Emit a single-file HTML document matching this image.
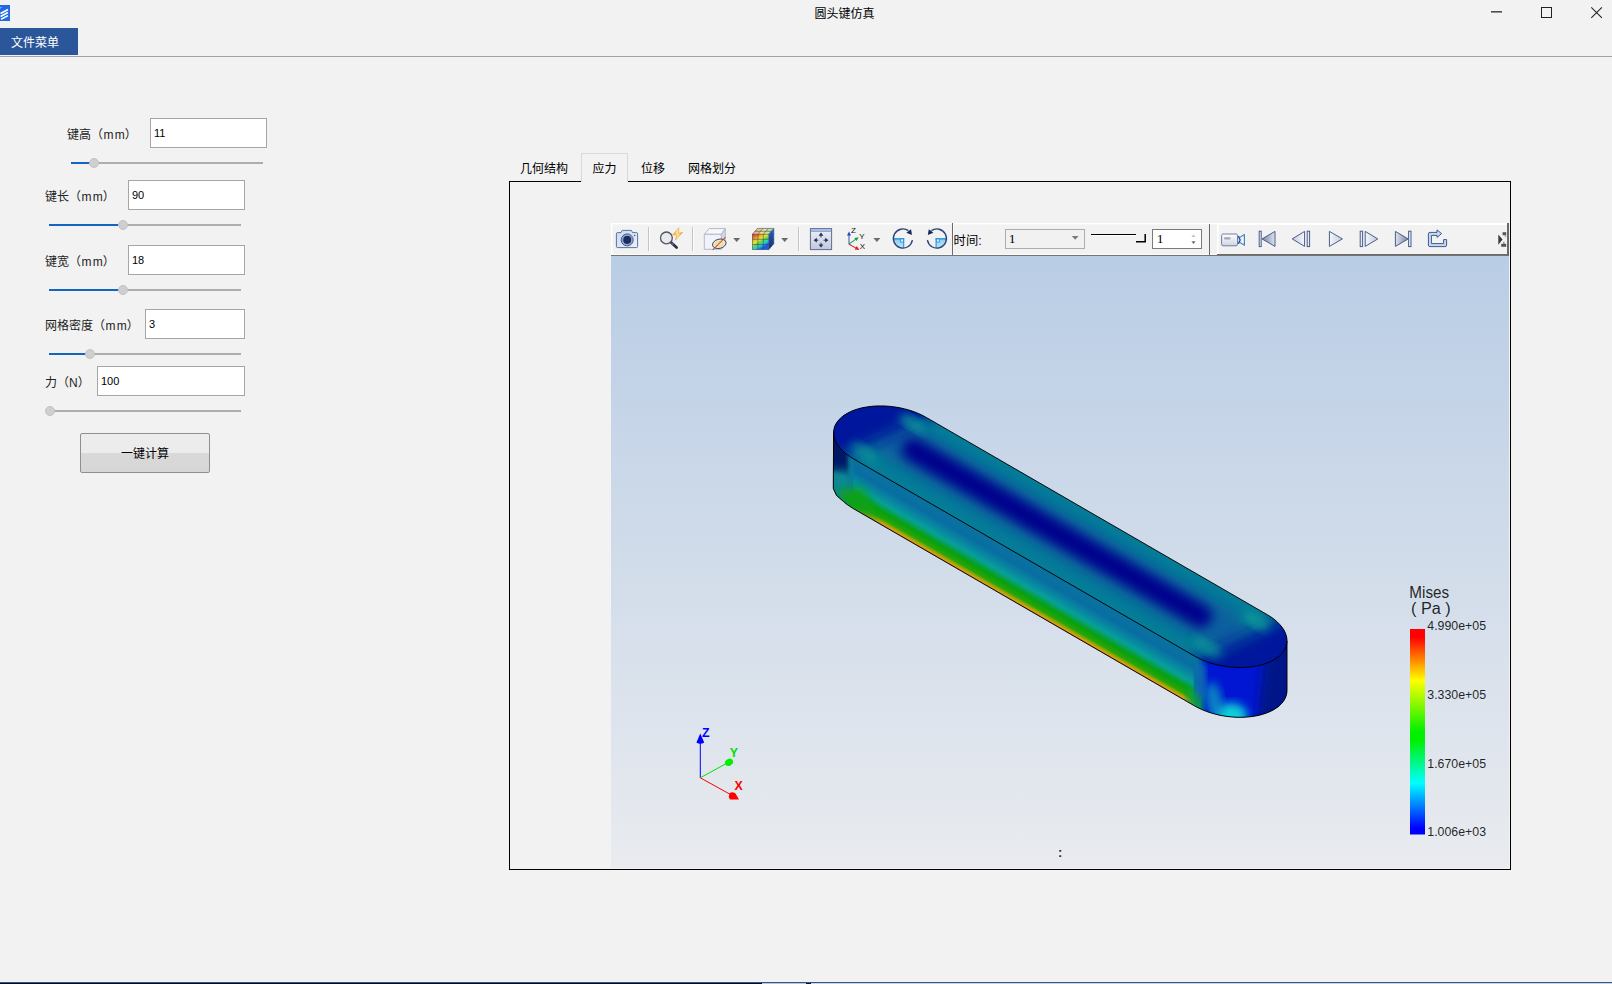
<!DOCTYPE html>
<html lang="zh-CN">
<head>
<meta charset="utf-8">
<title>圆头键仿真</title>
<style>
*{box-sizing:border-box;margin:0;padding:0}
html,body{width:1612px;height:984px;overflow:hidden;background:#f2f2f2}
body{position:relative;font-family:"Liberation Sans","Noto Sans CJK SC",sans-serif;font-size:12px;color:#1a1a1a}
.abs{position:absolute}
#title{left:814.5px;top:5px;width:62px;height:18px;line-height:18px;font-size:12px;color:#000;white-space:nowrap}
#menu{left:0;top:28px;width:78px;height:27px;background:#2b579a;color:#fff;font-size:12px;line-height:31px;padding-left:11px;white-space:nowrap}
#menuline{left:0;top:56px;width:1612px;height:1px;background:#a2a2a2}
.lbl{position:absolute;height:18px;line-height:18px;font-size:12px;color:#222;white-space:nowrap}
.lt{letter-spacing:1.1px;margin-right:-1.1px;padding-left:0.6px}
.inp{position:absolute;height:30px;background:#fff;border:1px solid #a6a6a6;font-size:11px;line-height:28px;padding-left:3px;color:#000}
.trk{position:absolute;height:2px;background:#adadad}
.trk i{position:absolute;left:0;top:0;height:2px;background:#1565c0}
.trk b{position:absolute;top:-4px;width:10px;height:10px;border-radius:50%;background:#cfcfcf;border:1px solid #c2c2c2}
#btn{left:80px;top:433px;width:130px;height:40px;border:1px solid #8f8f8f;border-radius:2px;background:linear-gradient(#ececec 0,#ececec 49%,#d9d9d9 51%,#d6d6d6 100%);text-align:center;line-height:41px;font-size:12px;color:#000}
.tab{position:absolute;top:160px;height:18px;line-height:18px;font-size:12px;color:#000;white-space:nowrap}
#tabsel{left:581px;top:153px;width:47px;height:29px;border:1px solid #d9d9d9;border-bottom:none;background:#f2f2f2;z-index:2}
#panel{left:509px;top:181px;width:1002px;height:689px;border:1px solid #000}
#tb{left:611px;top:223px;width:898px;height:33px;background:#f2f2f2}
#vp{left:611px;top:256px;width:898px;height:612px;background:linear-gradient(#b9cde5,#e9ebef)}
#bottomline{left:0;top:982px;width:1612px;height:2px;background:linear-gradient(to right,#0c0c10 0,#0c0c10 762px,#c4c4c4 762px,#c4c4c4 806px,#111 806px,#111 811px,#cdd2dc 811px) 0 1px/100% 1px no-repeat,#2f5596}
</style>
</head>
<body>
<div id="title" class="abs">圆头键仿真</div>
<div id="menu" class="abs">文件菜单</div>
<div id="menuline" class="abs"></div>

<div class="lbl" style="left:67px;top:126px">键高（<span class="lt">mm</span>）</div>
<div class="inp" style="left:150px;top:118px;width:117px">11</div>
<div class="trk" style="left:71px;top:162px;width:192px"><i style="width:23px"></i><b style="left:18px"></b></div>

<div class="lbl" style="left:45px;top:188px">键长（<span class="lt">mm</span>）</div>
<div class="inp" style="left:128px;top:180px;width:117px">90</div>
<div class="trk" style="left:49px;top:224px;width:192px"><i style="width:74px"></i><b style="left:69px"></b></div>

<div class="lbl" style="left:45px;top:253px">键宽（<span class="lt">mm</span>）</div>
<div class="inp" style="left:128px;top:245px;width:117px">18</div>
<div class="trk" style="left:49px;top:289px;width:192px"><i style="width:74px"></i><b style="left:69px"></b></div>

<div class="lbl" style="left:45px;top:317px">网格密度（<span class="lt">mm</span>）</div>
<div class="inp" style="left:145px;top:309px;width:100px">3</div>
<div class="trk" style="left:49px;top:353px;width:192px"><i style="width:41px"></i><b style="left:36px"></b></div>

<div class="lbl" style="left:45px;top:374px">力（N）</div>
<div class="inp" style="left:97px;top:366px;width:148px">100</div>
<div class="trk" style="left:49px;top:410px;width:192px"><b style="left:-4px"></b></div>

<div id="btn" class="abs">一键计算</div>

<div class="tab" style="left:520px">几何结构</div>
<div id="tabsel" class="abs"></div>
<div class="tab" style="left:592.5px;z-index:3">应力</div>
<div class="tab" style="left:641px">位移</div>
<div class="tab" style="left:688px">网格划分</div>
<div id="panel" class="abs"></div>
<div id="tb" class="abs"></div>
<div id="vp" class="abs"></div>
<svg class="abs" style="left:611px;top:223px" width="898" height="33" viewBox="611 223 898 33" font-family="'Liberation Sans','Noto Sans CJK SC',sans-serif">
<defs>
<linearGradient id="gCam" x1="0" y1="0" x2="1" y2="1"><stop offset="0" stop-color="#c6d9f2"/><stop offset="0.6" stop-color="#dde8f8"/><stop offset="1" stop-color="#eaf1fb"/></linearGradient><linearGradient id="gBolt" x1="0" y1="0" x2="1" y2="0"><stop offset="0" stop-color="#f09a1c"/><stop offset="0.5" stop-color="#ffe9a0"/><stop offset="1" stop-color="#f09a1c"/></linearGradient>
<linearGradient id="gFit" x1="0" y1="0" x2="0" y2="1"><stop offset="0" stop-color="#eef1f7"/><stop offset="1" stop-color="#c3c8d6"/></linearGradient>
<linearGradient id="gTriD" x1="0" y1="0" x2="1" y2="0"><stop offset="0" stop-color="#76849f"/><stop offset="1" stop-color="#dfe4ee"/></linearGradient>
<linearGradient id="gTriDr" x1="1" y1="0" x2="0" y2="0"><stop offset="0" stop-color="#76849f"/><stop offset="1" stop-color="#dfe4ee"/></linearGradient>
<linearGradient id="gTriL" x1="0" y1="0" x2="1" y2="0"><stop offset="0" stop-color="#f6f7fa"/><stop offset="1" stop-color="#c4cbdc"/></linearGradient>
<linearGradient id="gTriLr" x1="1" y1="0" x2="0" y2="0"><stop offset="0" stop-color="#f6f7fa"/><stop offset="1" stop-color="#c4cbdc"/></linearGradient>
<linearGradient id="gQ" x1="0" y1="0" x2="0" y2="1"><stop offset="0" stop-color="#58b4e8"/><stop offset="0.2" stop-color="#9ad4f2"/><stop offset="1" stop-color="#c8e8f8"/></linearGradient>
<linearGradient id="gVid" x1="0" y1="0" x2="0" y2="1"><stop offset="0" stop-color="#ffffff"/><stop offset="1" stop-color="#cfd4e0"/></linearGradient>
<linearGradient id="gRb" x1="0" y1="0" x2="0.62" y2="0.9"><stop offset="0" stop-color="#dc2a1c"/><stop offset="0.18" stop-color="#ec6a20"/><stop offset="0.36" stop-color="#f2c024"/><stop offset="0.5" stop-color="#e0e630"/><stop offset="0.64" stop-color="#5cd84c"/><stop offset="0.8" stop-color="#30cfc8"/><stop offset="1" stop-color="#1c5cd8"/></linearGradient>
<linearGradient id="gRbT" x1="0" y1="0" x2="1" y2="0"><stop offset="0" stop-color="#f0a070"/><stop offset="0.5" stop-color="#f0e090"/><stop offset="1" stop-color="#a0e0a0"/></linearGradient>
<linearGradient id="gRbR" x1="0" y1="0" x2="0" y2="1"><stop offset="0" stop-color="#3070d8"/><stop offset="1" stop-color="#102880"/></linearGradient>
<clipPath id="cQ1"><circle cx="902.9" cy="238.5" r="9.4"/></clipPath>
<clipPath id="cQ2"><circle cx="936.9" cy="238.5" r="9.4"/></clipPath>
</defs>
<!-- background + bevels -->
<rect x="611" y="223" width="898" height="33" fill="#f2f2f2"/>
<rect x="611" y="223" width="898" height="1.4" fill="#fff"/>
<rect x="611" y="223" width="1.4" height="31" fill="#fff"/>
<rect x="611" y="254" width="606" height="1" fill="#fbfbfb"/>
<rect x="611" y="255" width="898" height="1" fill="#747474"/>
<rect x="1217" y="254" width="292" height="1" fill="#6e6c6a"/>
<rect x="1217" y="223" width="292" height="2" fill="#fff"/>
<rect x="1217" y="223" width="1.6" height="31" fill="#fff"/>
<rect x="952" y="223" width="1" height="32" fill="#6a6a6a"/>
<rect x="953" y="224" width="1" height="30" fill="#fafafa"/>
<rect x="1209" y="224" width="1" height="31" fill="#6a6a6a"/>
<rect x="1507" y="223" width="2" height="33" fill="#6a6a6a"/>
<!-- separators -->
<g fill="#c6c6c6"><rect x="648" y="227" width="1" height="24"/><rect x="692" y="227" width="1" height="24"/><rect x="798" y="227" width="1" height="24"/></g>
<g fill="#fafafa"><rect x="649" y="227" width="1" height="24"/><rect x="693" y="227" width="1" height="24"/><rect x="799" y="227" width="1" height="24"/></g>
<!-- 1 camera -->
<path d="M617.6 232.6 H621 L622.2 230.4 H631.4 L632.6 232.6 H636.4 Q637.6 232.6 637.6 233.8 V246.4 Q637.6 247.6 636.4 247.6 H617.6 Q616.4 247.6 616.4 246.4 V233.8 Q616.4 232.6 617.6 232.6Z" fill="url(#gCam)" stroke="#4a6498" stroke-width="0.9"/>
<circle cx="627.2" cy="239.9" r="6" fill="#d4e2f6" stroke="#1c3060" stroke-width="0.8"/><circle cx="627.2" cy="239.9" r="5" fill="none" stroke="#2c4478" stroke-width="0.5"/>
<circle cx="627.2" cy="239.9" r="4.1" fill="#1a2e60"/>
<circle cx="634.6" cy="235.5" r="0.8" fill="#3a5a98"/>
<!-- 2 magnifier -->
<path d="M671.2 242.6 L676.6 247.6" stroke="#303030" stroke-width="2.7" stroke-linecap="round"/>
<path d="M671.6 243 L673.4 244.6" stroke="#3a68b0" stroke-width="2.2"/>
<circle cx="666.4" cy="237.9" r="5.9" fill="#e6eaf1" stroke="#555" stroke-width="1.3"/>
<polygon points="678.9,227.8 672.8,234.7 677,235 675.2,240.2 682.6,232.4 678.6,233.2" fill="url(#gBolt)" stroke="#e8901c" stroke-width="0.5"/>
<!-- 3 cube w/ ellipse -->
<g stroke="#b3bace" stroke-width="1" stroke-linejoin="round">
<path d="M704.3 234.3 L709.3 228.6 H725.3 L721.3 234.3Z" fill="#f7f8fb"/>
<path d="M721.3 234.3 L725.3 228.6 V243.4 L721.3 249.3Z" fill="#d3d7e0"/>
<rect x="704.3" y="234.3" width="17" height="15" fill="#f1f3f8"/>
</g>
<ellipse cx="719.3" cy="243.8" rx="6.9" ry="4.6" transform="rotate(-14 719.3 243.8)" fill="#f3e7bd" stroke="#2c3e74" stroke-width="0.9"/>
<ellipse cx="719.3" cy="243.8" rx="3.8" ry="2.2" transform="rotate(-14 719.3 243.8)" fill="none" stroke="#e4c890" stroke-width="0.8"/>
<path d="M712.6 250 L725.6 237" stroke="#c8421f" stroke-width="1.05"/>
<polygon points="733.2,238 740.2,238 736.7,242" fill="#6b6b6b"/>
<!-- 4 rubik -->
<polygon points="752.4,234.2 757.4,228.4 773.8,228.4 768.8,234.2" fill="url(#gRbT)"/>
<polygon points="768.8,234.2 773.8,228.4 773.8,243.8 768.8,249.6" fill="url(#gRbR)"/>
<rect x="752.4" y="234.2" width="16.4" height="15.4" fill="url(#gRb)"/>
<g stroke="#2a3a60" stroke-width="0.7" fill="none" opacity="0.75">
<rect x="752.4" y="234.2" width="16.4" height="15.4"/>
<path d="M757.9 234.2 V249.6 M763.3 234.2 V249.6 M752.4 239.3 H768.8 M752.4 244.5 H768.8"/>
<path d="M752.4 234.2 L757.4 228.4 H773.8 L768.8 234.2 M773.8 228.4 V243.8 L768.8 249.6"/>
<path d="M757.9 234.2 L762.9 228.4 M763.3 234.2 L768.3 228.4 M754.9 231.3 H771.3 M771.3 231.3 V246.7 M768.8 239.3 L773.8 233.5 M768.8 244.5 L773.8 238.7"/>
</g>
<polygon points="781.2,238 788.2,238 784.7,242" fill="#6b6b6b"/>
<!-- 5 fit all -->
<rect x="810.4" y="228.6" width="21.2" height="21" fill="url(#gFit)" stroke="#5c6c9c" stroke-width="1"/>
<rect x="811" y="229.2" width="20" height="1.6" fill="#9db8de"/>
<rect x="810.4" y="230.9" width="21.2" height="0.8" fill="#7c8ab0"/>
<g fill="#1d3160" stroke="#1d3160" stroke-width="1.1">
<path d="M821 234.6 V245.8 M815.4 240.2 H826.6" fill="none" stroke-dasharray="3 5.2" stroke="#5a6c98" stroke-width="1.4"/>
<polygon points="821,232.6 823.4,235.8 818.6,235.8" stroke="none"/><polygon points="821,247.6 823.4,244.4 818.6,244.4" stroke="none"/>
<polygon points="813.6,240.2 816.8,237.8 816.8,242.6" stroke="none"/><polygon points="828.4,240.2 825.2,237.8 825.2,242.6" stroke="none"/>
</g>
<!-- 6 axes -->
<g stroke-width="1.05" fill="none">
<path d="M849 244.2 V234" stroke="#3a58c0"/><path d="M849 244.2 L856.6 238.6" stroke="#10a040"/><path d="M849 244.2 L857 248.6" stroke="#e02020"/>
</g>
<polygon points="849,231.4 851,235.4 847,235.4" fill="#2244c0"/>
<polygon points="858.6,237.2 854.4,238 856.6,241" fill="#10a040"/>
<polygon points="859.4,250 854.6,249.4 856.8,246" fill="#e02020"/>
<g font-size="8" fill="#111"><text x="851" y="232.9">Z</text><text x="859.2" y="239.4">Y</text><text x="859.8" y="249.4">X</text></g>
<polygon points="873.4,238 880.4,238 876.9,242" fill="#6b6b6b"/>
<!-- 7 rotate cw -->
<g clip-path="url(#cQ1)"><rect x="892" y="238.4" width="12.2" height="12" fill="url(#gQ)"/><rect x="892" y="238.2" width="12.2" height="1.2" fill="#2a90d8"/><rect x="903.2" y="238.4" width="1" height="12" fill="#2a90d8"/></g>
<rect x="900.4" y="239" width="3" height="3" fill="#d8eefa" stroke="#2a90d8" stroke-width="0.8"/>
<path d="M912.4 240.2 A9.6 9.6 0 1 1 908.4 230.6" fill="none" stroke="#2a4478" stroke-width="1.4"/>
<polygon points="911,229.2 912,235 906.4,232.8" fill="#14285a"/>
<!-- 8 rotate ccw -->
<g clip-path="url(#cQ2)"><rect x="935.6" y="238.4" width="12.2" height="12" fill="url(#gQ)"/><rect x="935.6" y="238.2" width="12.2" height="1.2" fill="#2a90d8"/><rect x="935.6" y="238.4" width="1" height="12" fill="#2a90d8"/></g>
<rect x="936.4" y="239" width="3" height="3" fill="#d8eefa" stroke="#2a90d8" stroke-width="0.8"/>
<path d="M927.4 240.2 A9.6 9.6 0 1 0 931.4 230.6" fill="none" stroke="#2a4478" stroke-width="1.4"/>
<polygon points="928.8,229.2 927.8,235 933.4,232.8" fill="#14285a"/>
<!-- time label -->
<text x="953.6" y="244.6" font-size="12" fill="#000" textLength="28" lengthAdjust="spacingAndGlyphs">时间:</text>
<!-- combo -->
<rect x="1005.5" y="229.5" width="79" height="19" fill="#f1f1f1" stroke="#adadad" stroke-width="1"/>
<text x="1008.8" y="243.2" font-size="13.5" font-family="'Liberation Serif',serif" fill="#000">1</text>
<polygon points="1071.8,236 1078.6,236 1075.2,239.8" fill="#7a7a7a"/>
<!-- mini slider -->
<path d="M1091 234.5 H1136" stroke="#000" stroke-width="1"/><path d="M1092 235.5 H1136" stroke="#fff" stroke-width="1"/>
<path d="M1145.2 234 V241.8 H1136" stroke="#000" stroke-width="1.5" fill="none"/>
<!-- spinbox -->
<rect x="1152.5" y="229.5" width="49" height="19" fill="#fff" stroke="#7a7a7a" stroke-width="1"/>
<text x="1156.8" y="243.2" font-size="13.5" font-family="'Liberation Serif',serif" fill="#000">1</text>
<polygon points="1191.4,237 1195.6,237 1193.5,234.2" fill="#c4c4c4"/>
<polygon points="1191.4,241.2 1195.6,241.2 1193.5,244" fill="#6a6a6a"/>
<!-- video cam -->
<path d="M1237.2 235.8 L1240 237.2 L1244.4 234.4 V245.4 L1240 242.6 L1237.2 244Z" fill="#bfe6fa" stroke="#2a62ac" stroke-width="0.9"/>
<path d="M1238.4 236.4 L1240.2 239.9 L1238.4 243.4" fill="none" stroke="#2a3c70" stroke-width="1.1"/><rect x="1241.6" y="237.2" width="1.8" height="5.4" fill="#f4fbff"/>
<rect x="1221.6" y="234" width="16" height="11.8" rx="1.6" fill="url(#gVid)" stroke="#6c7ea8" stroke-width="1"/>
<rect x="1224" y="237.2" width="6.6" height="2.4" rx="1" fill="#a4a8b0"/>
<!-- playback -->
<g stroke="#4a5e8c" stroke-width="1" stroke-linejoin="miter">
<rect x="1259.2" y="231.2" width="2" height="15.4" fill="#e6eaf2"/>
<polygon points="1262,238.9 1275,231.4 1275,246.4" fill="url(#gTriD)"/>
<polygon points="1292.2,238.9 1304.6,231.4 1304.6,246.4" fill="url(#gTriLr)"/>
<rect x="1307.2" y="231.2" width="2.4" height="15.4" fill="#e6eaf2"/>
<polygon points="1329.4,231.4 1342.4,238.9 1329.4,246.4" fill="url(#gTriL)"/>
<rect x="1360.2" y="231.2" width="2.4" height="15.4" fill="#e6eaf2"/>
<polygon points="1365.2,231.4 1377.8,238.9 1365.2,246.4" fill="url(#gTriL)"/>
<polygon points="1395.4,231.4 1408.2,238.9 1395.4,246.4" fill="url(#gTriDr)"/>
<rect x="1408.6" y="231.2" width="2.4" height="15.4" fill="#e6eaf2"/>
</g>
<!-- loop -->
<path d="M1437 232.4 H1430 Q1428.4 232.4 1428.4 234 V245 Q1428.4 246.6 1430 246.6 H1445 Q1446.6 246.6 1446.6 245 V239.6 H1443.6 V243.6 H1431.4 V235.4 H1437 V237.4 L1441.6 233.6 L1437 229.9Z" fill="#c9d9f1" stroke="#3e5a90" stroke-width="1" stroke-linejoin="round"/>
<!-- extension -->
<g fill="#3a3a3a"><polygon points="1498.3,234.4 1502.6,239.6 1498.3,244.8"/><rect x="1502.6" y="232.2" width="3.6" height="3" opacity="0.85"/><rect x="1501.2" y="243.8" width="5" height="3" opacity="0.85"/><rect x="1504.6" y="235.2" width="1.6" height="2" opacity="0.35"/><rect x="1503" y="241.8" width="1.6" height="2" opacity="0.5"/></g>
</svg>

<svg class="abs" style="left:611px;top:256px" width="898" height="612" viewBox="611 256 898 612">
<defs>
<clipPath id="cTop"><path d="M1267.3 614.7 L1270.9 616.9 L1274.2 619.3 L1277.1 621.8 L1279.7 624.4 L1281.9 627.1 L1283.8 629.8 L1285.2 632.6 L1286.2 635.4 L1286.8 638.2 L1287.0 641.0 L1286.7 643.7 L1286.0 646.4 L1284.9 649.0 L1283.4 651.5 L1281.5 653.8 L1279.2 656.1 L1276.5 658.1 L1273.5 660.0 L1270.2 661.7 L1266.5 663.2 L1262.6 664.5 L1258.5 665.6 L1254.1 666.4 L1249.6 667.0 L1244.9 667.4 L1240.1 667.5 L1235.2 667.4 L1230.3 667.0 L1225.5 666.4 L1220.6 665.6 L1215.8 664.5 L1211.2 663.2 L1206.7 661.7 L1202.4 660.0 L1198.3 658.1 L1194.4 656.0 L853.2 458.7 L849.7 456.5 L846.4 454.1 L843.4 451.6 L840.9 449.0 L838.6 446.3 L836.8 443.6 L835.4 440.8 L834.4 438.0 L833.8 435.2 L833.6 432.4 L833.9 429.7 L834.5 427.0 L835.6 424.4 L837.2 421.9 L839.1 419.6 L841.4 417.4 L844.0 415.3 L847.1 413.4 L850.4 411.7 L854.0 410.2 L857.9 408.9 L862.1 407.8 L866.5 407.0 L871.0 406.4 L875.7 406.0 L880.5 405.9 L885.3 406.0 L890.2 406.4 L895.1 407.0 L899.9 407.8 L904.7 408.9 L909.4 410.2 L913.9 411.7 L918.2 413.4 L922.3 415.3 L926.2 417.4 Z"/></clipPath>
<clipPath id="cSil"><path d="M833.3 488.4 L833.6 432.4 L833.9 429.7 L834.5 427.0 L835.6 424.4 L837.2 421.9 L839.1 419.6 L841.4 417.4 L844.0 415.3 L847.1 413.4 L850.4 411.7 L854.0 410.2 L857.9 408.9 L862.1 407.8 L866.5 407.0 L871.0 406.4 L875.7 406.0 L880.5 405.9 L885.3 406.0 L890.2 406.4 L895.1 407.0 L899.9 407.8 L904.7 408.9 L909.4 410.2 L913.9 411.7 L918.2 413.4 L922.3 415.3 L926.2 417.4 L1267.3 614.7 L1270.9 616.9 L1274.2 619.3 L1277.1 621.8 L1279.7 624.4 L1281.9 627.1 L1283.8 629.8 L1285.2 632.6 L1286.2 635.4 L1286.8 638.2 L1287.0 641.0 L1287.0 690.8 L1286.7 693.5 L1286.0 696.2 L1284.9 698.8 L1283.4 701.3 L1281.5 703.6 L1279.2 705.9 L1276.5 707.9 L1273.5 709.8 L1270.2 711.5 L1266.5 713.0 L1262.6 714.3 L1258.5 715.4 L1254.1 716.2 L1249.6 716.8 L1244.9 717.2 L1240.1 717.3 L1235.2 717.2 L1230.3 716.8 L1225.5 716.2 L1220.6 715.4 L1215.8 714.3 L1211.2 713.0 L1206.7 711.5 L1202.4 709.8 L1198.3 707.9 L1194.4 705.8 L853.2 508.5 L849.7 506.3 L847.2 504.6 L843.4 501.4 L836.5 495.4 Z"/></clipPath>
<filter id="b8" x="-20%" y="-20%" width="140%" height="140%"><feGaussianBlur stdDeviation="8"/></filter>
<filter id="b6" x="-20%" y="-20%" width="140%" height="140%"><feGaussianBlur stdDeviation="6"/></filter>
<filter id="b5" x="-20%" y="-20%" width="140%" height="140%"><feGaussianBlur stdDeviation="5"/></filter>
<filter id="b2" x="-20%" y="-20%" width="140%" height="140%"><feGaussianBlur stdDeviation="1.6"/></filter>
<filter id="b3" x="-20%" y="-20%" width="140%" height="140%"><feGaussianBlur stdDeviation="3"/></filter>
<filter id="b12" x="-30%" y="-30%" width="160%" height="160%"><feGaussianBlur stdDeviation="12"/></filter>
<linearGradient id="gFront" gradientUnits="userSpaceOnUse" x1="853.2" y1="458.7" x2="831.4" y2="496.4">
<stop offset="0.00" stop-color="#0a72a0"/>
<stop offset="0.24" stop-color="#086ea2"/>
<stop offset="0.40" stop-color="#0886a0"/>
<stop offset="0.55" stop-color="#06a09a"/>
<stop offset="0.64" stop-color="#08a050"/>
<stop offset="0.72" stop-color="#06a010"/>
<stop offset="0.86" stop-color="#2ca406"/>
<stop offset="0.92" stop-color="#98a808"/>
<stop offset="0.96" stop-color="#d8a010"/>
<stop offset="1.00" stop-color="#d0500c"/>
</linearGradient>
</defs>
<g clip-path="url(#cSil)">
<path d="M833.3 488.4 L833.6 432.4 L833.9 429.7 L834.5 427.0 L835.6 424.4 L837.2 421.9 L839.1 419.6 L841.4 417.4 L844.0 415.3 L847.1 413.4 L850.4 411.7 L854.0 410.2 L857.9 408.9 L862.1 407.8 L866.5 407.0 L871.0 406.4 L875.7 406.0 L880.5 405.9 L885.3 406.0 L890.2 406.4 L895.1 407.0 L899.9 407.8 L904.7 408.9 L909.4 410.2 L913.9 411.7 L918.2 413.4 L922.3 415.3 L926.2 417.4 L1267.3 614.7 L1270.9 616.9 L1274.2 619.3 L1277.1 621.8 L1279.7 624.4 L1281.9 627.1 L1283.8 629.8 L1285.2 632.6 L1286.2 635.4 L1286.8 638.2 L1287.0 641.0 L1287.0 690.8 L1286.7 693.5 L1286.0 696.2 L1284.9 698.8 L1283.4 701.3 L1281.5 703.6 L1279.2 705.9 L1276.5 707.9 L1273.5 709.8 L1270.2 711.5 L1266.5 713.0 L1262.6 714.3 L1258.5 715.4 L1254.1 716.2 L1249.6 716.8 L1244.9 717.2 L1240.1 717.3 L1235.2 717.2 L1230.3 716.8 L1225.5 716.2 L1220.6 715.4 L1215.8 714.3 L1211.2 713.0 L1206.7 711.5 L1202.4 709.8 L1198.3 707.9 L1194.4 705.8 L853.2 508.5 L849.7 506.3 L847.2 504.6 L843.4 501.4 L836.5 495.4 Z" fill="#0a789c"/>
<path d="M853.2 458.7 L1194.4 656.0 L1194.4 706.8 L853.2 509.5 Z" fill="url(#gFront)"/>
<polygon points="820.0,420.0 846.0,420.0 846.0,500.0 820.0,500.0" fill="#04208c" filter="url(#b3)"/>
<polygon points="826.0,425.0 847.5,440.0 847.5,476.0 826.0,470.0" fill="#00145e" filter="url(#b2)" opacity="0.85"/>
<polygon points="826.0,470.0 847.5,476.0 847.5,492.0 826.0,486.0" fill="#0c7a88" filter="url(#b2)" opacity="0.85"/>
<polygon points="826.0,486.0 847.5,492.0 847.5,515.0 826.0,505.0" fill="#0a7a20" filter="url(#b2)" opacity="0.85"/>
<polygon points="828.0,470.0 850.0,470.0 858.0,515.0 828.0,500.0" fill="#0a8c96" filter="url(#b5)" opacity="0.9"/>
<polygon points="838.0,490.0 862.0,488.0 880.0,520.0 845.0,512.0" fill="#10a018" filter="url(#b5)"/>
<polygon points="1202.0,652.4 1300.0,640.0 1300.0,730.0 1190.0,740.0 1202.0,730.4" fill="#0618d2" filter="url(#b3)"/>
<polygon points="1266.0,640.0 1300.0,630.0 1300.0,730.0 1256.0,730.0" fill="#041488" filter="url(#b5)"/>
<ellipse cx="1231.0" cy="716.0" rx="16.0" ry="13.0" transform="rotate(0.0 1231.0 716.0)" fill="#08d0d8" filter="url(#b5)"/>
<ellipse cx="1214.0" cy="700.0" rx="8.0" ry="18.0" transform="rotate(-10.0 1214.0 700.0)" fill="#0aa0c0" filter="url(#b5)" opacity="0.8"/>
<polygon points="1187.3,685.9 1202.0,694.4 1202.0,716.4 1187.3,707.9" fill="#10a040" filter="url(#b3)" opacity="0.9"/>
<polygon points="1195.4,660.5 1205.8,666.6 1205.8,700.6 1195.4,694.5" fill="#0a68b4" filter="url(#b3)" opacity="0.9"/>
</g>
<g clip-path="url(#cTop)">
<path d="M1267.3 614.7 L1270.9 616.9 L1274.2 619.3 L1277.1 621.8 L1279.7 624.4 L1281.9 627.1 L1283.8 629.8 L1285.2 632.6 L1286.2 635.4 L1286.8 638.2 L1287.0 641.0 L1286.7 643.7 L1286.0 646.4 L1284.9 649.0 L1283.4 651.5 L1281.5 653.8 L1279.2 656.1 L1276.5 658.1 L1273.5 660.0 L1270.2 661.7 L1266.5 663.2 L1262.6 664.5 L1258.5 665.6 L1254.1 666.4 L1249.6 667.0 L1244.9 667.4 L1240.1 667.5 L1235.2 667.4 L1230.3 667.0 L1225.5 666.4 L1220.6 665.6 L1215.8 664.5 L1211.2 663.2 L1206.7 661.7 L1202.4 660.0 L1198.3 658.1 L1194.4 656.0 L853.2 458.7 L849.7 456.5 L846.4 454.1 L843.4 451.6 L840.9 449.0 L838.6 446.3 L836.8 443.6 L835.4 440.8 L834.4 438.0 L833.8 435.2 L833.6 432.4 L833.9 429.7 L834.5 427.0 L835.6 424.4 L837.2 421.9 L839.1 419.6 L841.4 417.4 L844.0 415.3 L847.1 413.4 L850.4 411.7 L854.0 410.2 L857.9 408.9 L862.1 407.8 L866.5 407.0 L871.0 406.4 L875.7 406.0 L880.5 405.9 L885.3 406.0 L890.2 406.4 L895.1 407.0 L899.9 407.8 L904.7 408.9 L909.4 410.2 L913.9 411.7 L918.2 413.4 L922.3 415.3 L926.2 417.4 Z" fill="#067e98"/>
<line x1="897.6" y1="440.8" x2="1224.6" y2="629.8" stroke="#0a58a0" stroke-width="42" stroke-linecap="round" filter="url(#b8)" opacity="0.8"/>
<line x1="913.2" y1="449.8" x2="1200.4" y2="615.9" stroke="#00008c" stroke-width="23" stroke-linecap="round" filter="url(#b6)"/>
<polygon points="952.8,405.0 821.8,468.3 753.1,428.6 874.6,359.8" fill="#04129c" filter="url(#b8)"/>
<polygon points="1303.5,607.8 1172.5,671.1 1245.9,713.6 1367.4,644.8" fill="#04129c" filter="url(#b8)"/>
<ellipse cx="913.0" cy="423.5" rx="15.0" ry="6.0" transform="rotate(30.0 913.0 423.5)" fill="#10a09a" filter="url(#b5)" opacity="0.8"/>
<ellipse cx="864.0" cy="452.0" rx="15.0" ry="6.0" transform="rotate(30.0 864.0 452.0)" fill="#10a09a" filter="url(#b5)" opacity="0.7"/>
<ellipse cx="1256.0" cy="621.0" rx="15.0" ry="6.0" transform="rotate(30.0 1256.0 621.0)" fill="#10a09a" filter="url(#b5)" opacity="0.8"/>
<ellipse cx="1207.0" cy="647.0" rx="17.0" ry="6.0" transform="rotate(30.0 1207.0 647.0)" fill="#10a09a" filter="url(#b5)" opacity="0.7"/>
</g>
<path d="M833.3 488.4 L833.6 432.4 L833.9 429.7 L834.5 427.0 L835.6 424.4 L837.2 421.9 L839.1 419.6 L841.4 417.4 L844.0 415.3 L847.1 413.4 L850.4 411.7 L854.0 410.2 L857.9 408.9 L862.1 407.8 L866.5 407.0 L871.0 406.4 L875.7 406.0 L880.5 405.9 L885.3 406.0 L890.2 406.4 L895.1 407.0 L899.9 407.8 L904.7 408.9 L909.4 410.2 L913.9 411.7 L918.2 413.4 L922.3 415.3 L926.2 417.4 L1267.3 614.7 L1270.9 616.9 L1274.2 619.3 L1277.1 621.8 L1279.7 624.4 L1281.9 627.1 L1283.8 629.8 L1285.2 632.6 L1286.2 635.4 L1286.8 638.2 L1287.0 641.0 L1287.0 690.8 L1286.7 693.5 L1286.0 696.2 L1284.9 698.8 L1283.4 701.3 L1281.5 703.6 L1279.2 705.9 L1276.5 707.9 L1273.5 709.8 L1270.2 711.5 L1266.5 713.0 L1262.6 714.3 L1258.5 715.4 L1254.1 716.2 L1249.6 716.8 L1244.9 717.2 L1240.1 717.3 L1235.2 717.2 L1230.3 716.8 L1225.5 716.2 L1220.6 715.4 L1215.8 714.3 L1211.2 713.0 L1206.7 711.5 L1202.4 709.8 L1198.3 707.9 L1194.4 705.8 L853.2 508.5 L849.7 506.3 L847.2 504.6 L843.4 501.4 L836.5 495.4 Z" fill="none" stroke="#000" stroke-width="0.95"/>
<path d="M1287.0 641.0 L1286.7 643.7 L1286.0 646.4 L1284.9 649.0 L1283.4 651.5 L1281.5 653.8 L1279.2 656.1 L1276.5 658.1 L1273.5 660.0 L1270.2 661.7 L1266.5 663.2 L1262.6 664.5 L1258.5 665.6 L1254.1 666.4 L1249.6 667.0 L1244.9 667.4 L1240.1 667.5 L1235.2 667.4 L1230.3 667.0 L1225.5 666.4 L1220.6 665.6 L1215.8 664.5 L1211.2 663.2 L1206.7 661.7 L1202.4 660.0 L1198.3 658.1 L1194.4 656.0 L853.2 458.7 L849.7 456.5 L846.4 454.1 L843.4 451.6 L840.9 449.0 L838.6 446.3 L836.8 443.6 L835.4 440.8 L834.4 438.0 L833.8 435.2 L833.6 432.4" fill="none" stroke="#000" stroke-width="0.95"/>
<g font-family="'Liberation Sans',sans-serif" fill="#000" fill-opacity="0.86">
<text x="1409.3" y="597.7" font-size="16.4" textLength="39.8" lengthAdjust="spacingAndGlyphs">Mises</text>
<text x="1411" y="613.7" font-size="16" textLength="39.6" lengthAdjust="spacingAndGlyphs">( Pa )</text>
<text x="1427.3" y="629.9" font-size="12" textLength="58.7" lengthAdjust="spacingAndGlyphs">4.990e+05</text>
<text x="1427.3" y="699.1" font-size="12" textLength="58.7" lengthAdjust="spacingAndGlyphs">3.330e+05</text>
<text x="1427.3" y="767.9" font-size="12" textLength="58.7" lengthAdjust="spacingAndGlyphs">1.670e+05</text>
<text x="1427.3" y="835.7" font-size="12" textLength="58.7" lengthAdjust="spacingAndGlyphs">1.006e+03</text>
<text x="1057.9" y="857.1" font-size="13" font-weight="bold">:</text>
</g>
<defs><linearGradient id="gBar" x1="0" y1="0" x2="0" y2="1">
<stop offset="0" stop-color="#ff0000"/><stop offset="0.04" stop-color="#ff0000"/><stop offset="0.25" stop-color="#ffff00"/><stop offset="0.5" stop-color="#00f000"/><stop offset="0.54" stop-color="#00f000"/><stop offset="0.75" stop-color="#00ffff"/><stop offset="0.97" stop-color="#0000ff"/><stop offset="1" stop-color="#0000ff"/>
</linearGradient></defs>
<rect x="1410" y="629" width="15" height="205.5" fill="url(#gBar)"/>
<g stroke-width="1" fill="none">
<line x1="700.3" y1="777.8" x2="700.3" y2="740" stroke="#0000ff"/>
<line x1="700.3" y1="777.8" x2="728" y2="762.6" stroke="#00e000"/>
<line x1="700.3" y1="777.8" x2="731" y2="794.8" stroke="#ff0000"/>
</g>
<path d="M700.3 733.6 L704.2 742.4 Q700.3 745.2 696.4 742.4 Z" fill="#0000ff"/>
<ellipse cx="729" cy="762.3" rx="4.2" ry="3.4" transform="rotate(-25 729 762.3)" fill="#00f000"/>
<path d="M729.5 793.5 Q732 791 735.5 793.5 L739 799.5 L730 799.5 Q728 796.5 729.5 793.5Z" fill="#ff0000"/>
<g font-family="'Liberation Sans',sans-serif" font-weight="bold" font-size="12.4">
<text x="702" y="736.6" fill="#0000ff">Z</text>
<text x="729.8" y="756.6" fill="#00e000">Y</text>
<text x="734.4" y="790.2" fill="#ff0000">X</text>
</g>

</svg>
<svg class="abs" style="left:0;top:0" width="1612" height="28" viewBox="0 0 1612 28">
<rect x="0" y="5" width="10" height="16" fill="#1e6ae6"/>
<g stroke="#fff" stroke-width="1.6" fill="none"><path d="M0.5 13.5 L8 9.5"/><path d="M0.5 16.5 L8 12.5"/><path d="M1 19.3 L8 15.6"/><path d="M0 8.2 L1.5 7.4" stroke="#cfd8e8" stroke-width="1"/></g>
<rect x="1491" y="11" width="11" height="1.6" fill="#4d4d4d"/>
<rect x="1541.5" y="7.5" width="10" height="10" fill="none" stroke="#222" stroke-width="1"/>
<path d="M1591.3 7.3 L1601.9 17.9 M1601.9 7.3 L1591.3 17.9" stroke="#222" stroke-width="1.05" fill="none"/>
</svg>

<div id="bottomline" class="abs"></div>
</body>
</html>
